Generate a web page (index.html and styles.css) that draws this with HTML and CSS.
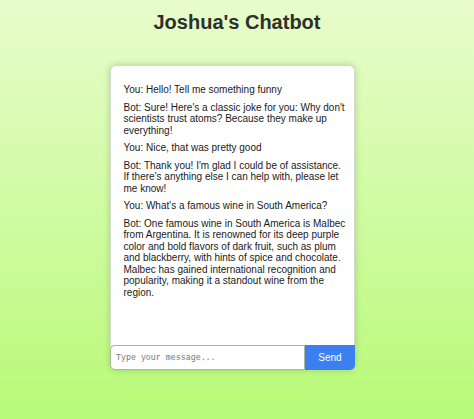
FILE: index.html
```html
<!DOCTYPE html>
<html>
<head>
<meta charset="utf-8">
<title>Joshua's Chatbot</title>
<link rel="stylesheet" href="styles.css">
</head>
<body>
<div class="page">
  <h1 class="title">Joshua's Chatbot</h1>
  <div class="chat">
    <div class="messages">
      <p class="msg">You: Hello! Tell me something funny</p>
      <p class="msg">Bot: Sure! Here's a classic joke for you: Why don't scientists trust atoms? Because they make up everything!</p>
      <p class="msg">You: Nice, that was pretty good</p>
      <p class="msg">Bot: Thank you! I'm glad I could be of assistance. If there's anything else I can help with, please let me know!</p>
      <p class="msg">You: What's a famous wine in South America?</p>
      <p class="msg">Bot: One famous wine in South America is Malbec from Argentina. It is renowned for its deep purple color and bold flavors of dark fruit, such as plum and blackberry, with hints of spice and chocolate. Malbec has gained international recognition and popularity, making it a standout wine from the region.</p>
    </div>
    <form class="composer">
      <input class="field" type="text" placeholder="Type your message..." autofocus>
      <button class="send" type="button">Send</button>
    </form>
  </div>
</div>
</body>
</html>
```
FILE: styles.css
```css
html, body {
  margin: 0;
  padding: 0;
}
body {
  min-height: 419px;
  background: linear-gradient(to bottom, #e8fccc 0%, #d2fba6 45%, #b8fa78 100%);
  font-family: "Liberation Sans", Arial, sans-serif;
  color: #222;
}
.page {
  display: flex;
  flex-direction: column;
  padding-top: 11px;
}
.title {
  margin: 0;
  font-size: 20px;
  font-weight: bold;
  text-align: center;
  color: #2e302b;
  line-height: 23px;
}
.chat {
  margin: 31px 0 0 110px;
  width: 245px;
  display: flex;
  flex-direction: column;
  border-radius: 6px;
  box-shadow: 0 0 6px rgba(110, 150, 80, 0.45);
}
.messages {
  height: 280px;
  box-sizing: border-box;
  padding: 18px 7px 10px 12.5px;
  background: #fff;
  border: 1px solid #d6d8d2;
  border-bottom: none;
  border-radius: 6px 6px 0 0;
}
.msg {
  margin: 0 0 6px 0;
  font-size: 10px;
  line-height: 11.5px;
  color: #1a1a1a;
}
.composer {
  display: flex;
  margin: 0;
  height: 25px;
}
.field {
  flex: 1;
  margin: 0;
  box-sizing: border-box;
  height: 25px;
  border: 1px solid #a9b79c;
  border-radius: 5px 0 0 5px;
  padding: 0 5px;
  font-family: "Liberation Mono", "Courier New", monospace;
  font-size: 8.3px;
  background: #fff;
  outline: none;
}
.field::placeholder {
  color: #757575;
}
.send {
  width: 50px;
  height: 25px;
  margin: 0;
  border: none;
  border-radius: 0 0 5px 0;
  background: #3b7ff0;
  color: #fff;
  font-family: "Liberation Sans", Arial, sans-serif;
  font-size: 10px;
}
```
